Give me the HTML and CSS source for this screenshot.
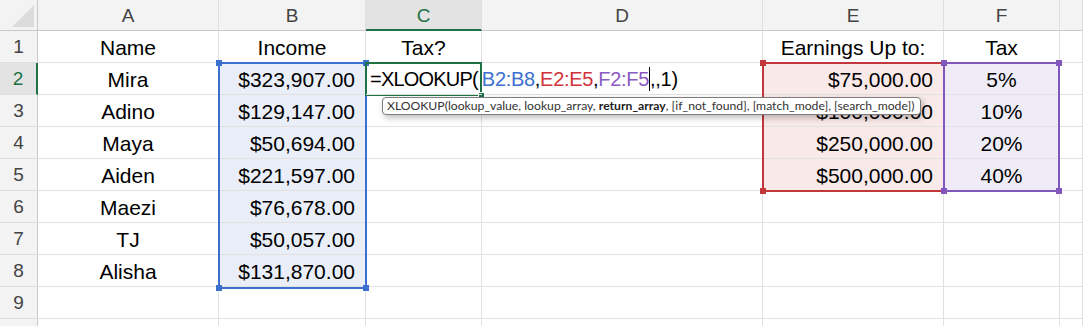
FILE: index.html
```html
<!DOCTYPE html>
<html lang="en">
<head>
    <meta charset="UTF-8">
    <title>Tax lookup</title>
    <link rel="stylesheet" href="styles.css">
</head>
<body>
    <div class="sheet">
        <div class="corner"><span class="corner-tri"></span></div>
        <div class="col-head">A</div>
        <div class="col-head">B</div>
        <div class="col-head active">C</div>
        <div class="col-head">D</div>
        <div class="col-head">E</div>
        <div class="col-head">F</div>
        <div class="col-head"></div>

        <div class="row-head">1</div>
        <div class="cell center">Name</div>
        <div class="cell center">Income</div>
        <div class="cell center">Tax?</div>
        <div class="cell"></div>
        <div class="cell center">Earnings Up to:</div>
        <div class="cell center">Tax</div>
        <div class="cell"></div>

        <div class="row-head active">2</div>
        <div class="cell center">Mira</div>
        <div class="cell right sel-b">$323,907.00</div>
        <div class="cell formula"><span class="fn">=XLOOKUP(</span><span class="ref-b">B2:B8</span>,<span class="ref-e">E2:E5</span>,<span class="ref-f">F2:F5</span><span class="caret"></span>,,1)</div>
        <div class="cell"></div>
        <div class="cell right sel-e">$75,000.00</div>
        <div class="cell center sel-f">5%</div>
        <div class="cell"></div>

        <div class="row-head">3</div>
        <div class="cell center">Adino</div>
        <div class="cell right sel-b">$129,147.00</div>
        <div class="cell"></div>
        <div class="cell"></div>
        <div class="cell right sel-e">$100,000.00</div>
        <div class="cell center sel-f">10%</div>
        <div class="cell"></div>

        <div class="row-head">4</div>
        <div class="cell center">Maya</div>
        <div class="cell right sel-b">$50,694.00</div>
        <div class="cell"></div>
        <div class="cell"></div>
        <div class="cell right sel-e">$250,000.00</div>
        <div class="cell center sel-f">20%</div>
        <div class="cell"></div>

        <div class="row-head">5</div>
        <div class="cell center">Aiden</div>
        <div class="cell right sel-b">$221,597.00</div>
        <div class="cell"></div>
        <div class="cell"></div>
        <div class="cell right sel-e">$500,000.00</div>
        <div class="cell center sel-f">40%</div>
        <div class="cell"></div>

        <div class="row-head">6</div>
        <div class="cell center">Maezi</div>
        <div class="cell right sel-b">$76,678.00</div>
        <div class="cell"></div>
        <div class="cell"></div>
        <div class="cell"></div>
        <div class="cell"></div>
        <div class="cell"></div>

        <div class="row-head">7</div>
        <div class="cell center">TJ</div>
        <div class="cell right sel-b">$50,057.00</div>
        <div class="cell"></div>
        <div class="cell"></div>
        <div class="cell"></div>
        <div class="cell"></div>
        <div class="cell"></div>

        <div class="row-head">8</div>
        <div class="cell center">Alisha</div>
        <div class="cell right sel-b">$131,870.00</div>
        <div class="cell"></div>
        <div class="cell"></div>
        <div class="cell"></div>
        <div class="cell"></div>
        <div class="cell"></div>

        <div class="row-head">9</div>
        <div class="cell"></div>
        <div class="cell"></div>
        <div class="cell"></div>
        <div class="cell"></div>
        <div class="cell"></div>
        <div class="cell"></div>
        <div class="cell"></div>

        <div class="row-head"></div>
        <div class="cell"></div>
        <div class="cell"></div>
        <div class="cell"></div>
        <div class="cell"></div>
        <div class="cell"></div>
        <div class="cell"></div>
        <div class="cell"></div>

        <!-- range highlights for the formula being edited -->
        <div class="range range-b">
            <span class="handle tl"></span><span class="handle tr"></span>
            <span class="handle bl"></span><span class="handle br"></span>
        </div>
        <div class="range range-e">
            <span class="handle tl"></span><span class="handle bl"></span>
        </div>
        <div class="range range-f">
            <span class="handle tl"></span><span class="handle tr"></span>
            <span class="handle bl"></span><span class="handle br"></span>
        </div>
        <div class="active-cell"><span class="fill-handle"></span></div>

        <div class="tooltip">XLOOKUP(lookup_value, lookup_array, <b>return_array</b>, [if_not_found], [match_mode], [search_mode])</div>
    </div>
</body>
</html>
```

FILE: styles.css
```css
* {
    box-sizing: border-box;
}
body {
    margin: 0;
    background-color: #fff;
    font-family: "Liberation Sans", Arial, sans-serif;
    overflow: hidden;
}
.sheet {
    position: relative;
    display: grid;
    grid-template-columns: 38px 181px 147px 116px 281px 181px 116px 23px;
    grid-template-rows: 31px repeat(10, 32px);
    width: 1083px;
    height: 326px;
    overflow: hidden;
}
.corner {
    position: relative;
    background-color: #f3f3f3;
    border-right: 1px solid #c9c9c9;
    border-bottom: 1px solid #c9c9c9;
}
.corner-tri {
    position: absolute;
    right: 3px;
    bottom: 3px;
    width: 0;
    height: 0;
    border-left: 22px solid transparent;
    border-bottom: 22px solid #dcdcdc;
}
.col-head {
    background-color: #f3f3f3;
    border-right: 1px solid #dedede;
    border-bottom: 1px solid #c9c9c9;
    color: #444;
    font-size: 19px;
    text-align: center;
    line-height: 31px;
}
.col-head.active {
    background-color: #e3e3e3;
    color: #1e7145;
    border-bottom: 2px solid #1e7145;
}
.row-head {
    background-color: #f3f3f3;
    border-right: 1px solid #c9c9c9;
    border-bottom: 1px solid #dedede;
    color: #444;
    font-size: 19px;
    text-align: center;
    line-height: 32px;
}
.row-head.active {
    background-color: #e3e3e3;
    color: #1e7145;
    border-right: 2px solid #1e7145;
}
.cell {
    border-right: 1px solid #e1e1e1;
    border-bottom: 1px solid #e1e1e1;
    font-size: 21px;
    color: #000;
    line-height: 31px;
    padding: 1px 10px 0;
    white-space: nowrap;
}
.center {
    text-align: center;
}
.right {
    text-align: right;
}
.sel-b {
    background-color: #e9eef8;
}
.sel-e {
    background-color: #f9e9e9;
}
.sel-f {
    background-color: #efecf7;
}
.formula {
    position: relative;
    z-index: 2;
    font-size: 20px;
    padding-left: 4px;
    letter-spacing: -0.3px;
    overflow: visible;
    border-right: none;
}
.formula .fn {
    letter-spacing: -0.8px;
}
.ref-b {
    color: #3c70cf;
    margin-left: 4px;
}
.ref-e {
    color: #d0343a;
}
.ref-f {
    color: #8a5cc4;
}
.caret {
    display: inline-block;
    width: 1px;
    height: 24px;
    background-color: #000;
    vertical-align: -5px;
}
.range {
    position: absolute;
    border: 2px solid;
}
.range-b {
    left: 218px;
    top: 62px;
    width: 149px;
    height: 227px;
    border-color: #3c70cf;
}
.range-e {
    left: 762px;
    top: 62px;
    width: 183px;
    height: 130px;
    border-color: #c1373c;
}
.range-f {
    left: 943px;
    top: 62px;
    width: 117px;
    height: 130px;
    border-color: #8257bb;
}
.handle {
    position: absolute;
    width: 6px;
    height: 6px;
}
.range-b .handle {
    background-color: #3c70cf;
}
.range-e .handle {
    background-color: #c1373c;
}
.range-f .handle {
    background-color: #8257bb;
}
.handle.tl { left: -4px; top: -4px; }
.handle.tr { right: -4px; top: -4px; }
.handle.bl { left: -4px; bottom: -4px; }
.handle.br { right: -4px; bottom: -4px; }
.active-cell {
    position: absolute;
    left: 365px;
    top: 62px;
    width: 117px;
    height: 34px;
    border: 2px solid #1e7145;
}
.fill-handle {
    position: absolute;
    right: -5px;
    bottom: -5px;
    width: 7px;
    height: 7px;
    background-color: #1e7145;
    border: 1px solid #fff;
}
.tooltip {
    position: absolute;
    left: 382px;
    top: 97px;
    width: 539px;
    height: 18px;
    padding: 0 4px;
    background-color: #fff;
    border: 1px solid #7c7c7c;
    border-radius: 4px;
    box-shadow: 2px 3px 6px rgba(0, 0, 0, 0.25);
    font-family: Lato, "Liberation Sans", sans-serif;
    font-size: 12.2px;
    line-height: 16px;
    color: #333;
    white-space: nowrap;
    overflow: hidden;
    z-index: 5;
}
.tooltip b {
    font-weight: bold;
    color: #222;
}
```
